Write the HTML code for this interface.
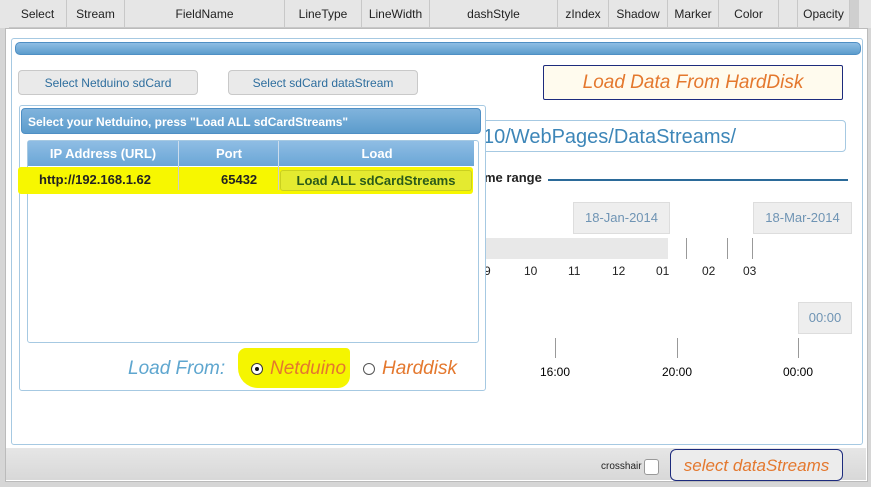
<!DOCTYPE html>
<html><head><style>
body{margin:0;width:871px;height:487px;overflow:hidden;background:#d6d6d6;font-family:"Liberation Sans",sans-serif;position:relative}
.a{position:absolute}
.hd{top:0;height:28px;background:#e6e6e6;border-bottom:1px solid #c8c8c8;font-size:12px;color:#222;line-height:28px;text-align:center;box-sizing:border-box;border-right:1px solid #c8c8c8}
.btn{background:#eaeaea;border:1px solid #c9c9c9;border-radius:4px;font-size:12px;color:#2e6e9e;text-align:center;box-sizing:border-box}
.it{font-style:italic}
</style></head><body>
<div class="a" style="left:0;top:0;width:871px;height:28px;background:#e6e6e6"></div>
<div class="a hd" style="left:9px;width:58px">Select</div>
<div class="a hd" style="left:67px;width:58px">Stream</div>
<div class="a hd" style="left:125px;width:160px">FieldName</div>
<div class="a hd" style="left:285px;width:77px">LineType</div>
<div class="a hd" style="left:362px;width:68px">LineWidth</div>
<div class="a hd" style="left:430px;width:128px">dashStyle</div>
<div class="a hd" style="left:558px;width:51px">zIndex</div>
<div class="a hd" style="left:609px;width:59px">Shadow</div>
<div class="a hd" style="left:668px;width:51px">Marker</div>
<div class="a hd" style="left:719px;width:60px">Color</div>
<div class="a hd" style="left:779px;width:19px"></div>
<div class="a hd" style="left:798px;width:52px">Opacity</div>
<div class="a" style="left:850px;top:0;width:9px;height:28px;background:#cfcfcf"></div>
<div class="a" style="left:5px;top:28px;width:861px;height:452px;background:#fff;border:1px solid #bbb"></div>
<div class="a" style="left:11px;top:38px;width:850px;height:405px;background:#fff;border:1px solid #a6c9e2;border-radius:3px"></div>
<div class="a" style="left:15px;top:42px;width:844px;height:11px;background:linear-gradient(#8fbde4,#5c9ccc);border:1px solid #4f8fc4;border-radius:5px"></div>
<div class="a btn" style="left:18px;top:70px;width:180px;height:25px;line-height:24px">Select Netduino sdCard</div>
<div class="a btn" style="left:228px;top:70px;width:190px;height:25px;line-height:24px">Select sdCard dataStream</div>
<div class="a it" style="left:543px;top:65px;width:298px;height:33px;border:1px solid #1d2b7d;background:#fffbee;border-radius:2px;font-size:19px;color:#e4782e;text-align:center;line-height:33px">Load Data From HardDisk</div>
<div class="a" style="left:470px;top:120px;width:376px;height:32px;border:1px solid #a6c9e2;border-radius:4px;font-size:20px;color:#3d86b8;line-height:32px;padding-left:12px;box-sizing:border-box">10/WebPages/DataStreams/</div>
<div class="a" style="left:484px;top:170px;font-size:13px;font-weight:bold;color:#222">me range</div>
<div class="a" style="left:548px;top:179px;width:300px;height:2px;background:#2b6a99"></div>
<div class="a" style="left:573px;top:202px;width:95px;height:30px;background:#eee;border:1px solid #ddd;color:#6f94b4;font-size:13px;line-height:30px;text-align:center">18-Jan-2014</div>
<div class="a" style="left:753px;top:202px;width:97px;height:30px;background:#eee;border:1px solid #ddd;color:#6f94b4;font-size:13px;line-height:30px;text-align:center">18-Mar-2014</div>
<div class="a" style="left:484px;top:238px;width:184px;height:21px;background:#e8e8e8"></div>
<div class="a" style="left:686px;top:238px;width:1px;height:21px;background:#999"></div>
<div class="a" style="left:727px;top:238px;width:1px;height:21px;background:#999"></div>
<div class="a" style="left:752px;top:238px;width:1px;height:21px;background:#999"></div>
<div class="a" style="left:484px;top:264px;font-size:12px;color:#222;word-spacing:0">
<span class="a" style="left:0">9</span><span class="a" style="left:40px">10</span><span class="a" style="left:84px">11</span><span class="a" style="left:128px">12</span><span class="a" style="left:172px">01</span><span class="a" style="left:218px">02</span><span class="a" style="left:259px">03</span></div>
<div class="a" style="left:798px;top:302px;width:52px;height:30px;background:#eee;border:1px solid #ddd;color:#6f94b4;font-size:13px;line-height:30px;text-align:center">00:00</div>
<div class="a" style="left:555px;top:338px;width:1px;height:20px;background:#999"></div>
<div class="a" style="left:677px;top:338px;width:1px;height:20px;background:#999"></div>
<div class="a" style="left:798px;top:338px;width:1px;height:20px;background:#999"></div>
<div class="a" style="left:540px;top:365px;font-size:12px">16:00</div>
<div class="a" style="left:662px;top:365px;font-size:12px">20:00</div>
<div class="a" style="left:783px;top:365px;font-size:12px">00:00</div>
<!-- dialog -->
<div class="a" style="left:19px;top:105px;width:465px;height:284px;background:#fff;border:1px solid #a6c9e2;border-radius:3px"></div>
<div class="a" style="left:21px;top:108px;width:460px;height:26px;background:linear-gradient(#80b3dc,#5c9ccc);border:1px solid #4f8fc4;border-radius:4px;color:#fff;font-size:12px;font-weight:bold;line-height:26px;padding-left:6px;box-sizing:border-box">Select your Netduino, press "Load ALL sdCardStreams"</div>
<div class="a" style="left:27px;top:140px;width:450px;height:201px;border:1px solid #a6c9e2;border-radius:3px;background:#fff"></div>
<div class="a" style="left:28px;top:141px;width:446px;height:25px;background:linear-gradient(#8fbde4,#6aa6d6);color:#fff;font-size:13px;font-weight:bold;line-height:25px">
<span class="a" style="left:0;width:150px;text-align:center">IP Address (URL)</span>
<span class="a" style="left:150px;width:100px;text-align:center;border-left:1px solid #cde">Port</span>
<span class="a" style="left:250px;width:196px;text-align:center;border-left:1px solid #cde">Load</span></div>
<div class="a" style="left:18px;top:167px;width:455px;height:27px;background:#f7f700;border-radius:3px"></div>
<div class="a" style="left:39px;top:172px;font-size:13px;font-weight:bold;color:#222">http://192.168.1.62</div>
<div class="a" style="left:178px;top:166px;width:1px;height:24px;background:#ccc"></div>
<div class="a" style="left:221px;top:172px;font-size:13px;font-weight:bold;color:#222">65432</div>
<div class="a" style="left:278px;top:166px;width:1px;height:24px;background:#ccc"></div>
<div class="a" style="left:280px;top:170px;width:190px;height:19px;background:#e4ea30;border:1px solid #cad020;border-radius:3px;color:#2a5a1a;font-size:13px;font-weight:bold;text-align:center;line-height:19px">Load ALL sdCardStreams</div>
<div class="a" style="left:238px;top:348px;width:112px;height:40px;background:#f5f500;border-radius:8px 4px 12px 20px"></div>
<div class="a it" style="left:128px;top:358px;font-size:19px;color:#5ea6cf">Load From:</div>
<div class="a" style="left:251px;top:363px;width:10px;height:10px;border:1px solid #333;border-radius:50%;background:#fff"></div>
<div class="a" style="left:255px;top:367px;width:4px;height:4px;border-radius:50%;background:#111"></div>
<div class="a it" style="left:270px;top:358px;font-size:19px;color:#e4782e">Netduino</div>
<div class="a" style="left:363px;top:363px;width:10px;height:10px;border:1px solid #555;border-radius:50%;background:#fff"></div>
<div class="a it" style="left:382px;top:358px;font-size:19px;color:#e4782e">Harddisk</div>
<!-- footer -->
<div class="a" style="left:6px;top:448px;width:860px;height:32px;background:linear-gradient(#e6e6e6,#d8d8d8)"></div>
<div class="a" style="left:601px;top:461px;font-size:10px;color:#222">crosshair</div>
<div class="a" style="left:644px;top:459px;width:13px;height:14px;border:1px solid #999;border-radius:3px;background:#fff"></div>
<div class="a it" style="left:670px;top:449px;width:173px;height:32px;border:1px solid #1d2b7d;border-radius:6px;background:#ececec;color:#e4782e;font-size:17px;line-height:32px;text-align:center;box-sizing:border-box">select dataStreams</div>
</body></html>
